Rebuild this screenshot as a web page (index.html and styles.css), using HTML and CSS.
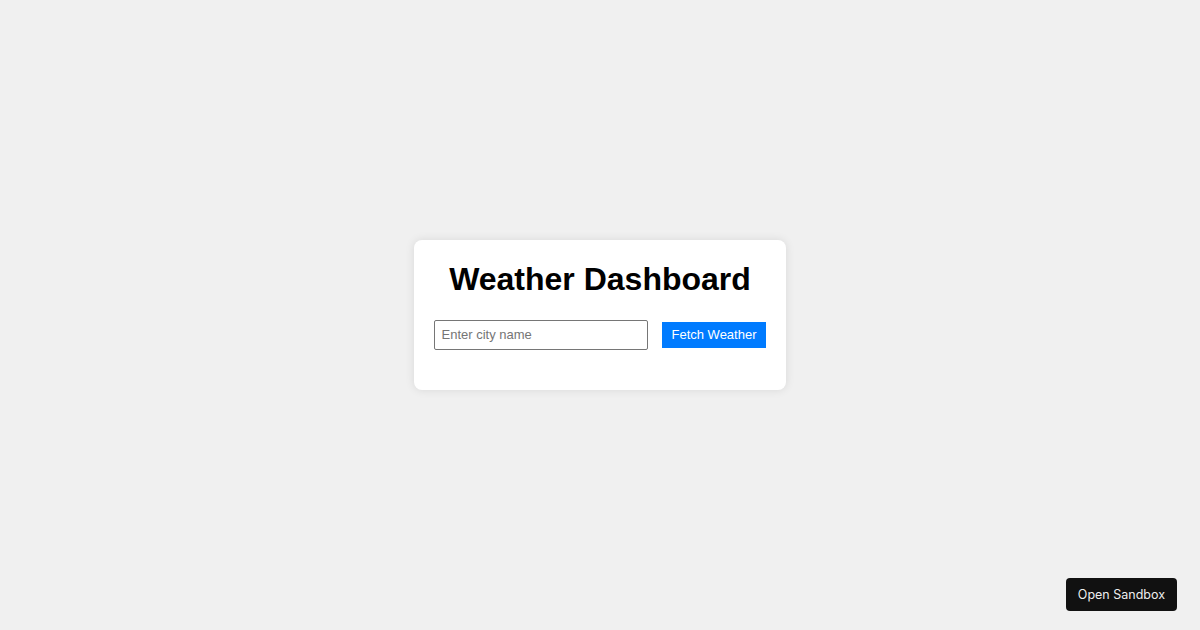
FILE: index.html
```html
<!DOCTYPE html>
<html lang="en">
<head>
  <meta charset="UTF-8" />
  <meta name="viewport" content="width=device-width, initial-scale=1.0" />
  <title>Weather Dashboard</title>
  <link rel="stylesheet" href="styles.css">
</head>
<body>
  <div class="card">
    <h1>Weather Dashboard</h1>
    <div class="search">
      <input id="city" type="text" placeholder="Enter city name">
      <button class="fetch-btn">Fetch Weather</button>
    </div>
    <div id="result" class="result"></div>
  </div>

  <button class="sandbox-btn">Open Sandbox</button>
</body>
</html>
```

FILE: styles.css
```css
html, body {
  height: 100%;
}

body {
  margin: 0;
  font-family: "Liberation Sans", Arial, sans-serif;
  background-color: #f0f0f0;
  display: flex;
  align-items: center;
  justify-content: center;
}

.card {
  background: white;
  border-radius: 8px;
  box-shadow: 0 0 10px rgba(0,0,0,0.1);
  padding: 21px 20px 20px;
  text-align: center;
}

h1 {
  font-size: 32px;
  margin: 0 0 22px;
  color: #000;
}

.search {
  display: flex;
  align-items: center;
  gap: 14px;
}

.search input {
  width: 200px;
  padding: 6px;
  font-size: 13px;
  font-family: inherit;
  border: 1px solid #767676;
  border-radius: 2px;
  line-height: 16px;
}

.search input::placeholder {
  color: #757575;
}

.fetch-btn {
  background: #007bff;
  color: white;
  border: none;
  padding: 5px 9px;
  font-size: 13px;
  font-family: inherit;
  line-height: 16px;
  cursor: pointer;
}

.result {
  margin-top: 20px;
}

.sandbox-btn {
  position: fixed;
  right: 23px;
  bottom: 19px;
  background: #111;
  color: #eee;
  border: none;
  border-radius: 4px;
  padding: 9px 12px;
  font-family: Inter, sans-serif;
  font-size: 12.5px;
  line-height: 15px;
  cursor: pointer;
}
```
